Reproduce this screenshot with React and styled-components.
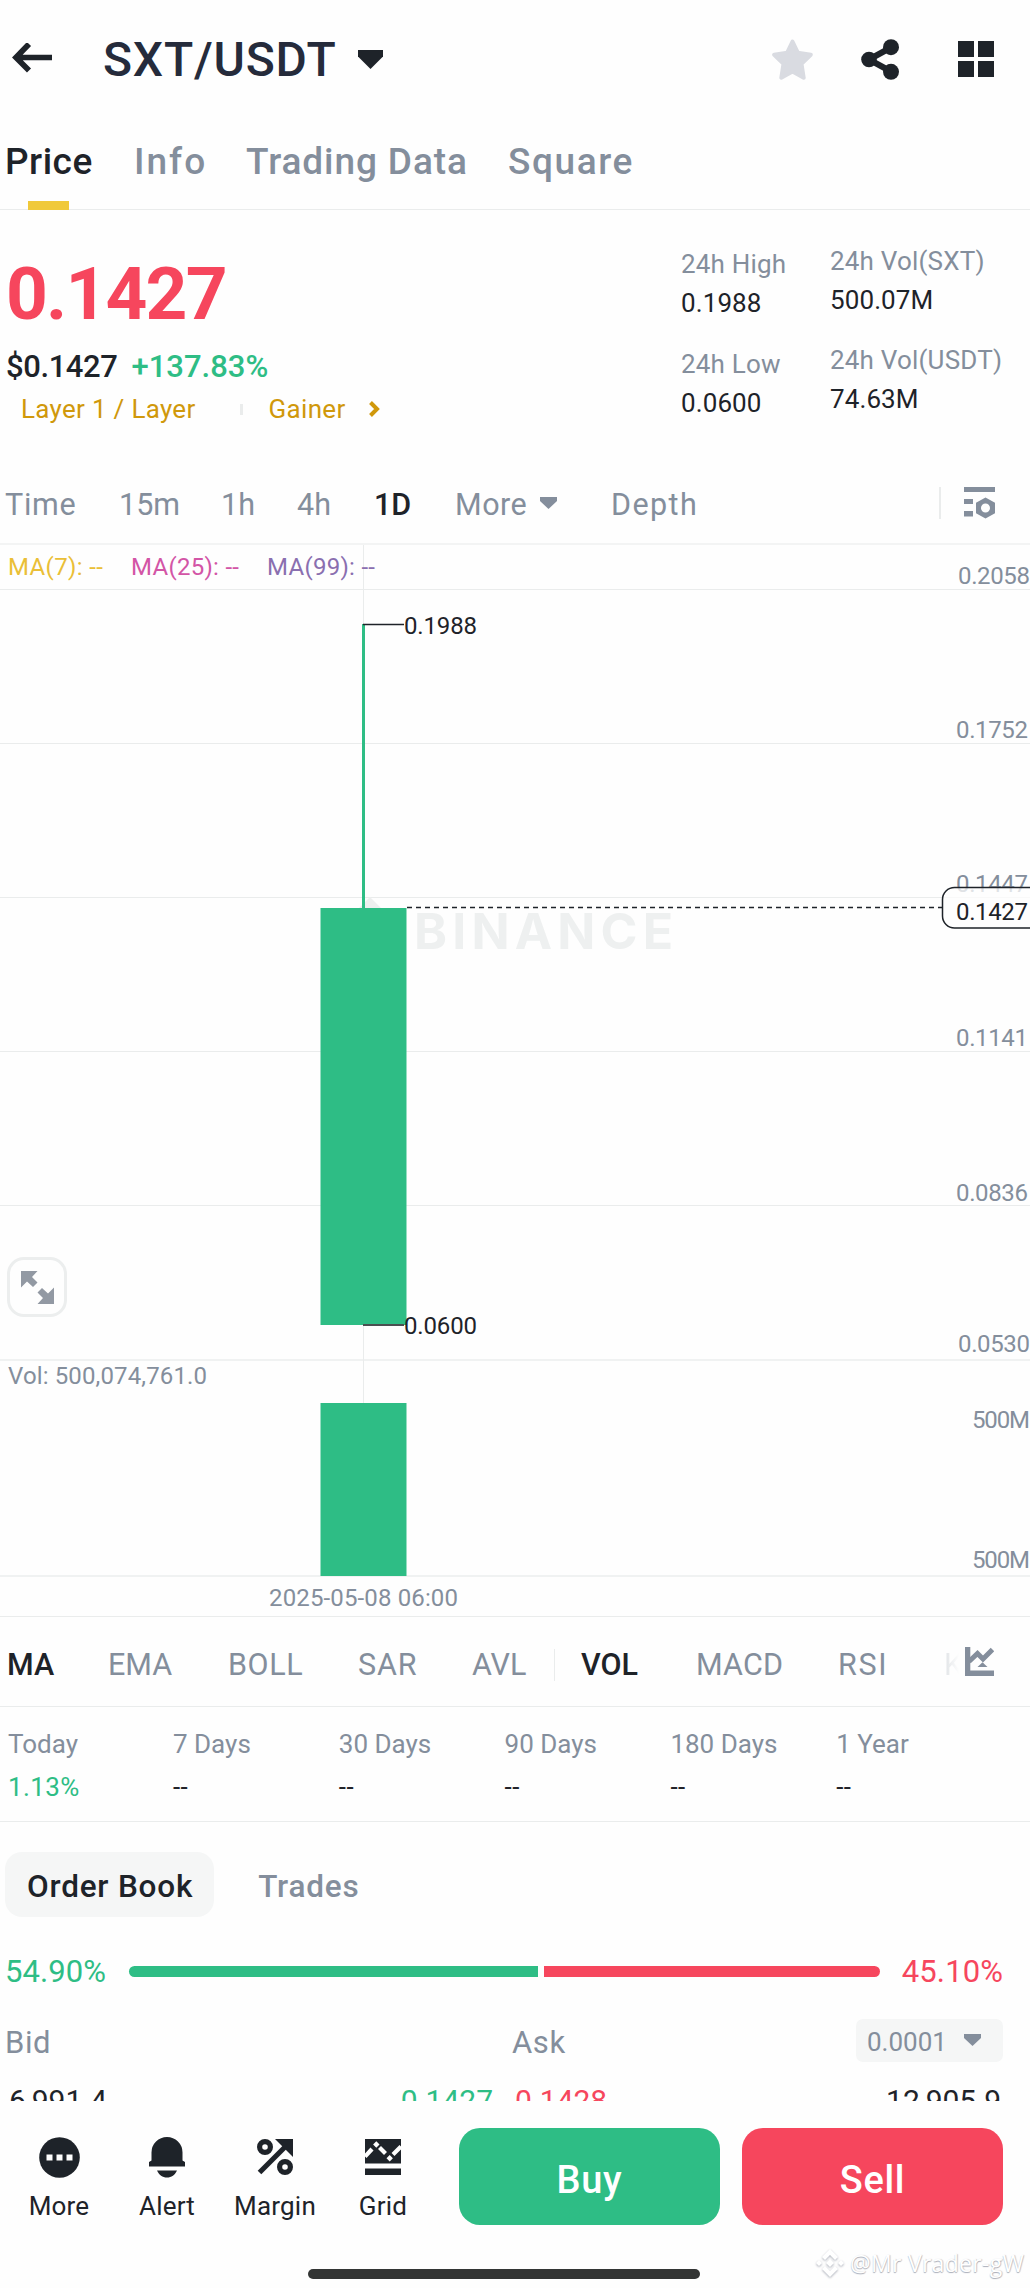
import styled, { createGlobalStyle } from "styled-components";

const GREEN = "#2ebd85";
const RED = "#f6465d";
const INK = "#1e2329";
const GREY = "#848e9c";
const LINE = "#eaecec";

const GlobalStyle = createGlobalStyle`
    * {
        box-sizing: border-box;
    }

    body {
        margin: 0;
        background: #fefefe;
        color: ${INK};
        font-family: Roboto, "Liberation Sans", sans-serif;
    }

    button {
        border: none;
        padding: 0;
        background: none;
        font-family: inherit;
        color: inherit;
        text-align: left;
    }

    svg {
        display: block;
        flex-shrink: 0;
    }
`

const Page = styled.main`
    width: 1030px;
    height: 2288px;
    overflow: hidden;
    position: relative;
    white-space: nowrap;
`

const Header = styled.header`
    display: flex;
    align-items: center;
    height: 118px;
    padding: 0 36px 0 12px;

    h1 {
        margin: 1px 21px 0 51px;
        font-size: 48px;
        font-weight: 500;
        line-height: 56px;
        letter-spacing: .8px;
        color: #252b3b;
    }
`

const HeaderActions = styled.div`
    display: flex;
    align-items: center;
    margin-left: auto;

    svg:nth-child(2) {
        margin: 0 59px 0 48px;
    }
`

const Tabs = styled.nav`
    display: grid;
    grid-template-columns: 129px 112px 262px auto;
    height: 92px;
    border-bottom: 1px solid ${LINE};
`

const Tab = styled.button`
    position: relative;
    padding: 0 0 5px 5px;
    font-size: 37px;
    font-weight: 500;
    letter-spacing: ${({ $spacing }) => $spacing || 0}px;
    color: ${({ $active }) => ($active ? INK : GREY)};

    &::after {
        content: "";
        display: ${({ $active }) => ($active ? "block" : "none")};
        position: absolute;
        left: 28px;
        bottom: -1px;
        width: 41px;
        height: 9px;
        background: #f0c93a;
    }
`

const Summary = styled.section`
    display: flex;
    height: 255px;
`

const PriceBlock = styled.div`
    width: 681px;
    padding: 44px 0 0 6px;
`

const LastPrice = styled.div`
    font-size: 73px;
    font-weight: 700;
    line-height: 80px;
    letter-spacing: -1.8px;
    color: ${RED};
`

const Change = styled.div`
    display: flex;
    gap: 14px;
    margin-top: 11px;
    font-size: 31px;
    font-weight: 500;
    line-height: 44px;

    span:first-child {
        letter-spacing: -.4px;
    }

    span:last-child {
        color: ${GREEN};
    }
`

const Tags = styled.div`
    display: flex;
    align-items: center;
    margin: 3px 0 0 15px;
    font-size: 26px;
    line-height: 34px;
    letter-spacing: .3px;
    color: #d0980b;

    i {
        width: 3px;
        height: 11px;
        margin: 0 26px 0 44px;
        background: ${LINE};
    }

    svg {
        margin-left: 23px;
    }
`

const StatColumn = styled.dl`
    width: ${({ $width }) => $width}px;
    margin: 0;
    padding-top: ${({ $top }) => $top}px;
    font-size: 26px;
    line-height: ${({ $line }) => $line}px;

    dt {
        letter-spacing: .2px;
        color: ${GREY};
    }

    dd {
        margin: 0 0 22px;
        letter-spacing: .1px;
    }
`

const Timeframes = styled.nav`
    display: grid;
    grid-template-columns: 114px 102px 76px 77px 81px 156px 329px auto;
    align-items: center;
    height: 80px;
    padding: 1px 0 0 5px;
    border-bottom: 2px solid #f3f4f4;
`

const TextButton = styled.button`
    display: flex;
    align-items: center;
    gap: 13px;
    font-size: 30.5px;
    line-height: 40px;
    font-weight: ${({ $active }) => ($active ? 500 : 400)};
    letter-spacing: ${({ $spacing }) => $spacing || 0}px;
    color: ${({ $active }) => ($active ? INK : GREY)};

    svg {
        margin-top: -4px;
    }
`

const ChartSettings = styled.div`
    display: flex;
    align-items: center;
    gap: 23px;
    margin: -3px 0 0 -1px;

    &::before {
        content: "";
        width: 2px;
        height: 32px;
        background: ${LINE};
    }
`

const ChartArea = styled.section`
    position: relative;
    height: 1071px;

    text {
        font-family: Roboto, "Liberation Sans", sans-serif;
        font-size: 24px;
    }
`

const ExpandButton = styled.button`
    display: grid;
    place-items: center;
    position: absolute;
    left: 7px;
    top: 712px;
    width: 60px;
    height: 60px;
    border: 3px solid #eceeee;
    border-radius: 17px;
    background: #fefefe;
`

const Indicators = styled.nav`
    display: grid;
    grid-template-columns: 101px 120px 130px 114px 82px 27px 115px 142px 106px 21px auto;
    align-items: center;
    height: 91px;
    padding: 6px 0 0 7px;
    border: solid ${LINE};
    border-width: 1px 0;

    i {
        width: 1px;
        height: 32px;
        background: ${LINE};
    }

    > svg {
        margin-top: -6px;
    }
`

const FadingLabel = styled.span`
    width: 20px;
    font-size: 30.5px;
    line-height: 40px;
    color: transparent;
    background: linear-gradient(to right, #dfe2e5, #fefefe 75%);
    background-clip: text;
`

const Returns = styled.section`
    display: grid;
    grid-template-columns: 165px repeat(5, 165.8px);
    height: 115px;
    padding: 16px 0 0 8px;
    border-bottom: 1px solid ${LINE};
    font-size: 26px;
    line-height: 43px;
`

const ReturnCell = styled.div`
    color: ${GREY};

    b {
        display: block;
        font-weight: 400;
        letter-spacing: .4px;
        color: ${({ $up }) => ($up ? GREEN : INK)};
    }
`

const Book = styled.section`
    height: 279px;
    padding: 30px 27px 0 5px;
    overflow: hidden;
`

const BookTabs = styled.div`
    display: flex;
    gap: 22px;
`

const BookTab = styled.button`
    height: 65px;
    padding: 4px 21px 0 22px;
    border-radius: 17px;
    font-size: 31.5px;
    font-weight: 500;
    letter-spacing: .8px;
    background: ${({ $active }) => ($active ? "#f5f6f6" : "transparent")};
    color: ${({ $active }) => ($active ? INK : GREY)};
`

const Ratio = styled.div`
    display: flex;
    align-items: center;
    justify-content: space-between;
    height: 44px;
    margin-top: 32px;
    font-size: 31px;
    letter-spacing: .1px;
`

const RatioBar = styled.div`
    display: flex;
    gap: 6px;
    width: 751px;
    height: 11px;
`

const RatioSide = styled.span`
    flex: ${({ $share }) => $share};
    border-radius: ${({ $sell }) => ($sell ? "0 6px 6px 0" : "6px 0 0 6px")};
    background: ${({ $sell }) => ($sell ? RED : GREEN)};
`

const RatioValue = styled.span`
    color: ${({ $sell }) => ($sell ? RED : GREEN)};
`

const BookHead = styled.div`
    display: grid;
    grid-template-columns: 507px 1fr auto;
    align-items: center;
    margin-top: 26px;
    font-size: 31px;
    color: ${GREY};

    > span {
        padding-top: 4px;
        letter-spacing: .6px;
    }
`

const StepSelect = styled.button`
    display: flex;
    align-items: center;
    gap: 17px;
    width: 147px;
    height: 43px;
    padding: 3px 0 0 11px;
    border-radius: 7px;
    background: #f5f6f6;
    font-size: 26px;
    color: ${GREY};

    svg {
        margin-top: -5px;
    }
`

const BookRow = styled.div`
    display: flex;
    justify-content: space-between;
    margin-top: 6px;
    padding: 12px 2px 0 4px;
    font-size: 30px;
    line-height: 42px;

    div {
        display: flex;
        justify-content: space-between;
    }

    div:first-child {
        width: 484px;
        color: ${INK};
    }

    div:last-child {
        width: 486px;
    }
`

const BookPrice = styled.span`
    color: ${({ $sell }) => ($sell ? RED : GREEN)};
`

const BottomBar = styled.footer`
    display: flex;
    height: 187px;
    padding: 27px 27px 0 5px;
    background: #fefefe;
`

const NavItem = styled.button`
    display: flex;
    flex-direction: column;
    align-items: center;
    width: 108px;
    height: 106px;
    font-size: 26px;
    line-height: 34px;
    letter-spacing: .2px;

    span {
        display: grid;
        place-items: center;
        height: 58px;
        margin-bottom: 3px;
    }
`

const TradeButton = styled.button`
    width: 261px;
    height: 97px;
    margin-left: 22px;
    padding-top: 6px;
    border-radius: 21px;
    font-size: 38px;
    font-weight: 500;
    letter-spacing: .7px;
    text-align: center;
    color: #fff;
    background: ${({ $sell }) => ($sell ? RED : GREEN)};
`

const HomeIndicator = styled.div`
    position: absolute;
    left: 308px;
    bottom: 9px;
    width: 392px;
    height: 10px;
    border-radius: 5px;
    background: #333534;
`

const Signature = styled.div`
    display: flex;
    align-items: center;
    gap: 5px;
    position: absolute;
    left: 815px;
    bottom: 8px;
    font-family: "Open Sans", sans-serif;
    font-size: 23px;
    line-height: 34px;
    letter-spacing: .3px;
    color: #fff;
    text-shadow: 0 1px 1px #a9adb8, 1px 0 1px #c9ccd3;

    svg {
        filter: drop-shadow(0 1px 1px #a9adb8);
    }
`

const Caret = ({ large }) =>
    large ? (
        <svg width="25" height="19" viewBox="0 0 25 19" fill={INK}><path d="M0 0h25v6.500L12.500 19 0 6.500z" /></svg>
    ) : (
        <svg width="17" height="12" viewBox="0 0 17 12" fill={GREY}><path d="M0 0h17v4L8.500 12 0 4z" /></svg>
    )

const BackIcon = () => (
    <svg width="40" height="32" viewBox="0 0 40 32" fill="none" stroke={INK} strokeWidth="5.700">
        <path d="M17 1 4 14.500l13 13M4 14.500h36" />
    </svg>
)

const StarIcon = () => (
    <svg width="41" height="41" viewBox="0 0 41 41" fill="#d9dbe1" stroke="#d9dbe1" strokeWidth="4" strokeLinejoin="round">
        <path d="m20.500 2.500 5.300 11.200 13 2-9.300 9 2.200 14-11.200-6.200-11.200 6.200 2.200-14-9.300-9 13-2z" />
    </svg>
)

const ShareIcon = () => (
    <svg width="38" height="41" viewBox="0 0 38 41" fill={INK} stroke={INK}>
        <path d="M8 20.500 30 8.500M8 20.500l22 12" strokeWidth="6" fill="none" />
        <circle cx="8" cy="20.500" r="7.800" strokeWidth="0" />
        <circle cx="30" cy="8.200" r="8" strokeWidth="0" />
        <circle cx="30" cy="32.800" r="8" strokeWidth="0" />
    </svg>
)

const TilesIcon = () => (
    <svg width="36" height="36" viewBox="0 0 36 36" fill={INK}>
        <path d="M0 0h16v16H0zM20 0h16v16H20zM0 20h16v16H0zM20 20h16v16H20z" />
    </svg>
)

const SettingsIcon = () => (
    <svg width="31" height="32" viewBox="0 0 31 32" fill={GREY}>
        <path d="M0 0h31v5H0zM0 12h9v5H0zM0 24h9v5.500H0z" />
        <path fillRule="evenodd" d="m21.500 10.500 9.500 5.300v10.400l-9.500 5.300-9.500-5.300V15.800zm0 6a4.500 4.500 0 1 0 0 9 4.500 4.500 0 0 0 0-9z" />
    </svg>
)

const LineChartIcon = () => (
    <svg width="29" height="29" viewBox="0 0 29 29" fill={GREY}>
        <path d="M0 0h5.300v23.500H29V29H0z" />
        <path d="m4 14.500 8.500-8 5.500 5.500 9.500-9.500" fill="none" stroke={GREY} strokeWidth="5" />
        <path d="m12.500 20 5-4.700 5 4.700z" />
    </svg>
)

const ExpandIcon = () => (
    <svg width="33" height="33" viewBox="0 0 33 33" fill="#9299a3">
        <path d="M0 0h16.500l-5.500 6 5.500 5.500-4.500 4.500-6-5.500L0 16.500z" />
        <path d="M33 33H16.500l5.500-6-5.500-5.500 4.500-4.500 6 5.500 6-6z" />
    </svg>
)

const MoreIcon = () => (
    <svg width="41" height="41" viewBox="0 0 41 41" fill={INK}>
        <circle cx="20.500" cy="20.500" r="20.300" />
        <path fill="#fefefe" d="M7.500 17.500h6v6h-6zM17.500 17.500h6v6h-6zM27.500 17.500h6v6h-6z" />
    </svg>
)

const BellIcon = () => (
    <svg width="36" height="41" viewBox="0 0 36 41" fill={INK}>
        <path d="M2.500 15.500a15.500 15.500 0 0 1 31 0V23.500l2.500 1.500v4.500H0V25l2.500-1.500zM8 33.500h20c-2 4.500-5.500 7-10 7s-8-2.500-10-7z" />
    </svg>
)

const MarginIcon = () => (
    <svg width="36" height="36" viewBox="0 0 36 36" fill="none" stroke={INK} strokeWidth="5.200">
        <circle cx="8" cy="8" r="5.400" />
        <circle cx="28" cy="28" r="5.400" />
        <path d="m2.500 33.500 26-26" />
        <path d="M18 0h18v18z" fill={INK} stroke="none" />
    </svg>
)

const GridIcon = () => (
    <svg width="36" height="36" viewBox="0 0 36 36" fill={INK}>
        <path d="M0 0h36v24.500H0zM0 29.500h36V36H0z" />
        <path d="m0 17.500 7-7.500M14.500 8.500l6 6M28 15.500l8-8" stroke="#fefefe" strokeWidth="4.200" />
        <path d="m11.300 2.300 3.200 3.200-3.200 3.200-3.200-3.200zM24.700 16l3.200 3.200-3.200 3.200-3.200-3.200z" fill="#fefefe" />
    </svg>
)

const gridLines = [589.5, 743.5, 897.5, 1051.5, 1205.5]

const axisLabels = [
    ["0.2058", 584, 72],
    ["0.1752", 738, 72],
    ["0.1447", 892, 72],
    ["0.1141", 1046, 72],
    ["0.0836", 1201, 72],
    ["0.0530", 1352, 72],
    ["500M", 1428, 58],
    ["500M", 1568, 58],
]

const averages = [
    ["MA(7): --", "#eabf37", 8, 95],
    ["MA(25): --", "#d355a6", 131, 108],
    ["MA(99): --", "#8a6fb0", 267, 108],
]

function Chart() {
    return (
        <svg width="1030" height="1071" viewBox="0 545 1030 1071">
            {gridLines.map((y) => (
                <path key={y} d={`M0 ${y}h1030`} stroke={LINE} />
            ))}
            <path d="M0 1360h1030M0 1576h1030" stroke="#f0f2f2" strokeWidth="2" />
            <path d="M363.500 545v858" stroke={LINE} />

            <path d="M370 897l14 14h-28z" fill="#eeefef" />
            <text x="414" y="948.500" textLength="259" fill="#eef0f0" style={{ fontFamily: "Inter, sans-serif", fontSize: 50, fontWeight: 700 }}>BINANCE</text>

            {averages.map(([label, color, x, width]) => (
                <text key={label} x={x} y="575" textLength={width} fill={color}>{label}</text>
            ))}
            {axisLabels.map(([label, y, width], i) => (
                <text key={i} x={i > 0 && i < 5 ? 1028 : 1030} y={y} textAnchor="end" textLength={width} fill={GREY}>{label}</text>
            ))}

            <path d="M363.500 624v285" stroke={GREEN} strokeWidth="3" />
            <path d="M320.500 908h86v417h-86zM320.500 1403h86v173h-86z" fill={GREEN} />
            <path d="M363 624.500h41" stroke={INK} strokeWidth="1.500" />
            <path d="M363 1325h41" stroke="#4a4f50" strokeWidth="2" />
            <text x="404" y="634" textLength="73" fill={INK}>0.1988</text>
            <text x="404" y="1334" textLength="73" fill={INK}>0.0600</text>

            <path d="M407 907.500h535" stroke={INK} strokeWidth="1.500" strokeDasharray="5 4" />
            <rect x="942.500" y="887.500" width="120" height="40.500" rx="12" fill="#fefefe" fillOpacity=".75" stroke={INK} strokeWidth="1.500" />
            <text x="1028" y="920" textAnchor="end" textLength="72" fill={INK}>0.1427</text>

            <text x="8" y="1384" textLength="199" fill={GREY}>Vol: 500,074,761.0</text>
            <text x="363.500" y="1606" textAnchor="middle" textLength="189" fill={GREY}>2025-05-08 06:00</text>
        </svg>
    )
}

const periods = [
    ["Today", "1.13%"],
    ["7 Days", "--"],
    ["30 Days", "--"],
    ["90 Days", "--"],
    ["180 Days", "--"],
    ["1 Year", "--"],
]

const navItems = [
    ["More", MoreIcon],
    ["Alert", BellIcon],
    ["Margin", MarginIcon],
    ["Grid", GridIcon],
]

function App() {
    return (
        <>
            <GlobalStyle />
            <Page>
                <Header>
                    <BackIcon />
                    <h1>SXT/USDT</h1>
                    <Caret large />
                    <HeaderActions>
                        <StarIcon />
                        <ShareIcon />
                        <TilesIcon />
                    </HeaderActions>
                </Header>

                <Tabs>
                    <Tab $active $spacing={0.5}>Price</Tab>
                    <Tab $spacing={2}>Info</Tab>
                    <Tab $spacing={0.9}>Trading Data</Tab>
                    <Tab $spacing={1.6}>Square</Tab>
                </Tabs>

                <Summary>
                    <PriceBlock>
                        <LastPrice>0.1427</LastPrice>
                        <Change>
                            <span>$0.1427</span>
                            <span>+137.83%</span>
                        </Change>
                        <Tags>
                            <span>Layer 1 / Layer</span>
                            <i />
                            <span>Gainer</span>
                            <svg width="11" height="16" viewBox="0 0 11 16" fill="none" stroke="#d0980b" strokeWidth="4">
                                <path d="m1.500 1.500 6.500 6.500-6.500 6.500" />
                            </svg>
                        </Tags>
                    </PriceBlock>
                    <StatColumn $width={149} $top={35} $line={39}>
                        <dt>24h High</dt>
                        <dd>0.1988</dd>
                        <dt>24h Low</dt>
                        <dd>0.0600</dd>
                    </StatColumn>
                    <StatColumn $width={180} $top={32} $line={38.6}>
                        <dt>24h Vol(SXT)</dt>
                        <dd>500.07M</dd>
                        <dt>24h Vol(USDT)</dt>
                        <dd>74.63M</dd>
                    </StatColumn>
                </Summary>

                <Timeframes>
                    <TextButton $spacing={0.7}>Time</TextButton>
                    <TextButton>15m</TextButton>
                    <TextButton>1h</TextButton>
                    <TextButton>4h</TextButton>
                    <TextButton $active>1D</TextButton>
                    <TextButton $spacing={0.5}>More <Caret /></TextButton>
                    <TextButton $spacing={1.4}>Depth</TextButton>
                    <ChartSettings>
                        <SettingsIcon />
                    </ChartSettings>
                </Timeframes>

                <ChartArea>
                    <Chart />
                    <ExpandButton>
                        <ExpandIcon />
                    </ExpandButton>
                </ChartArea>

                <Indicators>
                    <TextButton $active>MA</TextButton>
                    <TextButton>EMA</TextButton>
                    <TextButton $spacing={0.6}>BOLL</TextButton>
                    <TextButton $spacing={0.9}>SAR</TextButton>
                    <TextButton>AVL</TextButton>
                    <i />
                    <TextButton $active>VOL</TextButton>
                    <TextButton $spacing={0.2}>MACD</TextButton>
                    <TextButton $spacing={1.7}>RSI</TextButton>
                    <FadingLabel>K</FadingLabel>
                    <LineChartIcon />
                </Indicators>

                <Returns>
                    {periods.map(([label, value]) => (
                        <ReturnCell key={label} $up={value !== "--"}>
                            {label}
                            <b>{value}</b>
                        </ReturnCell>
                    ))}
                </Returns>

                <Book>
                    <BookTabs>
                        <BookTab $active>Order Book</BookTab>
                        <BookTab>Trades</BookTab>
                    </BookTabs>
                    <Ratio>
                        <RatioValue>54.90%</RatioValue>
                        <RatioBar>
                            <RatioSide $share={54.9} />
                            <RatioSide $sell $share={45.1} />
                        </RatioBar>
                        <RatioValue $sell>45.10%</RatioValue>
                    </Ratio>
                    <BookHead>
                        <span>Bid</span>
                        <span>Ask</span>
                        <StepSelect>0.0001 <Caret /></StepSelect>
                    </BookHead>
                    <BookRow>
                        <div>
                            <span>6,991.4</span>
                            <BookPrice>0.1427</BookPrice>
                        </div>
                        <div>
                            <BookPrice $sell>0.1428</BookPrice>
                            <span>12,905.9</span>
                        </div>
                    </BookRow>
                </Book>

                <BottomBar>
                    {navItems.map(([label, Icon]) => (
                        <NavItem key={label}>
                            <span><Icon /></span>
                            {label}
                        </NavItem>
                    ))}
                    <TradeButton>Buy</TradeButton>
                    <TradeButton $sell>Sell</TradeButton>
                </BottomBar>

                <HomeIndicator />
                <Signature>
                    <svg width="30" height="30" viewBox="0 0 30 30" fill="#fff">
                        <path d="m15 1 8 8-3 3-5-5-5 5-3-3zM15 29l-8-8 3-3 5 5 5-5 3 3zM4 12l3 3-3 3-3-3zM26 12l3 3-3 3-3-3zM15 11l4 4-4 4-4-4z" />
                    </svg>
                    @Mr Vrader-gW
                </Signature>
            </Page>
        </>
    )
}

export default App
